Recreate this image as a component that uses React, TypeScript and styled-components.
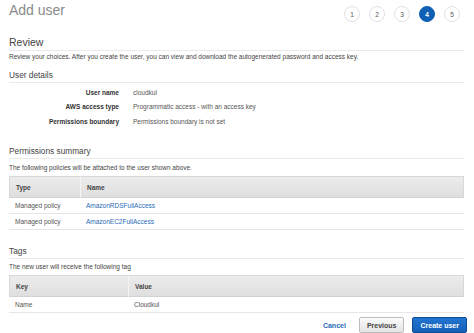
import React from "react";
import styled, { createGlobalStyle } from "styled-components";

const GlobalStyle = createGlobalStyle`
    html, body {
        margin: 0;
        padding: 0;
        background: #ffffff;
    }
    body {
        font-family: "Liberation Sans", Arial, Helvetica, sans-serif;
        color: #444;
    }
`;

const Page = styled.div`
    width: 474px;
    height: 333px;
    overflow: hidden;
    box-sizing: border-box;
    padding: 0 10px 0 9px;
    display: flex;
    flex-direction: column;
`;

const Header = styled.div`
    display: flex;
    justify-content: space-between;
    align-items: flex-start;
    height: 32px;
`;

const Title = styled.h1`
    margin: 0;
    font-size: 14px;
    line-height: 20px;
    font-weight: normal;
    color: #8a8a8a;
`;

const Steps = styled.div`
    display: flex;
    gap: 9px;
    margin-top: 6px;
    margin-right: 4px;
`;

const Step = styled.div<{ $active?: boolean }>`
    width: 16px;
    height: 16px;
    box-sizing: border-box;
    border-radius: 50%;
    display: flex;
    align-items: center;
    justify-content: center;
    font-size: 6.5px;
    border: 1px solid ${(p) => (p.$active ? "#0f5fb5" : "#e2e2e2")};
    background: ${(p) => (p.$active ? "#0f5fb5" : "#ffffff")};
    color: ${(p) => (p.$active ? "#ffffff" : "#555")};
    font-weight: ${(p) => (p.$active ? "bold" : "normal")};
`;

const PageHeading = styled.h2`
    margin: 0;
    padding: 3px 0 1px;
    font-size: 10.5px;
    line-height: 14px;
    font-weight: normal;
    color: #444;
    border-bottom: 1px solid #eaeaea;
`;

const SectionHeading = styled.h3<{ $top: number }>`
    margin: ${(p) => p.$top}px 0 0;
    padding-bottom: 1px;
    font-size: 8.3px;
    line-height: 12px;
    font-weight: normal;
    color: #444;
    border-bottom: 1px solid #eaeaea;
`;

const Description = styled.p<{ $top: number }>`
    margin: ${(p) => p.$top}px 0 0;
    font-size: 6.5px;
    line-height: 10px;
    color: #444;
`;

const Details = styled.div`
    display: grid;
    grid-template-columns: 110px 1fr;
    column-gap: 14px;
    margin-top: 3px;
`;

const DetailLabel = styled.div`
    text-align: right;
    font-weight: bold;
    font-size: 6.5px;
    line-height: 14.5px;
    color: #333;
`;

const DetailValue = styled.div`
    font-size: 6.5px;
    line-height: 14.5px;
    color: #555;
`;

const Table = styled.div<{ $cols: string; $top: number }>`
    display: grid;
    grid-template-columns: ${(p) => p.$cols};
    margin-top: ${(p) => p.$top}px;
    font-size: 6.5px;
`;

const HeadCell = styled.div`
    height: 20px;
    display: flex;
    align-items: center;
    padding-left: 6px;
    font-weight: bold;
    color: #444;
    background: linear-gradient(#ececec, #dfdfdf);
    border-top: 1px solid #d8d8d8;
    border-bottom: 1px solid #d2d2d2;
    &:first-child {
        border-left: 1px solid #d8d8d8;
    }
    & + & {
        border-left: 1px solid #f4f4f4;
        border-right: 1px solid #d8d8d8;
    }
`;

const Cell = styled.div<{ $link?: boolean }>`
    height: 15px;
    display: flex;
    align-items: center;
    padding-left: 6px;
    border-bottom: 1px solid #e6e6e6;
    color: ${(p) => (p.$link ? "#2a6ab8" : "#555")};
`;

const Footer = styled.div`
    display: flex;
    justify-content: flex-end;
    align-items: center;
    gap: 8px;
    margin-top: 4px;
    margin-right: -3px;
`;

const LinkButton = styled.button`
    border: none;
    background: none;
    padding: 0;
    margin-right: 5px;
    font-family: inherit;
    font-size: 7px;
    font-weight: bold;
    color: #2a6ab8;
`;

const Button = styled.button<{ $primary?: boolean }>`
    height: 16px;
    box-sizing: border-box;
    padding: 0 7px;
    border-radius: 2px;
    font-family: inherit;
    font-size: 7px;
    font-weight: bold;
    border: 1px solid ${(p) => (p.$primary ? "#0b4d96" : "#bcbcbc")};
    background: ${(p) =>
        p.$primary
            ? "linear-gradient(#2274cf, #1360b8)"
            : "linear-gradient(#fbfbfb, #e4e4e4)"};
    color: ${(p) => (p.$primary ? "#ffffff" : "#444")};
    min-width: ${(p) => (p.$primary ? "50px" : "40px")};
`;

const details = [
    ["User name", "cloudkul"],
    ["AWS access type", "Programmatic access - with an access key"],
    ["Permissions boundary", "Permissions boundary is not set"],
];

const policies = ["AmazonRDSFullAccess", "AmazonEC2FullAccess"];

const App: React.FC = () => {
    return (
        <>
            <GlobalStyle />
            <Page>
                <Header>
                    <Title>Add user</Title>
                    <Steps>
                        {[1, 2, 3, 4, 5].map((n) => (
                            <Step key={n} $active={n === 4}>
                                {n}
                            </Step>
                        ))}
                    </Steps>
                </Header>

                <PageHeading>Review</PageHeading>
                <Description $top={1}>
                    Review your choices. After you create the user, you can view and download the
                    autogenerated password and access key.
                </Description>

                <SectionHeading $top={7}>User details</SectionHeading>
                <Details>
                    {details.map(([label, value]) => (
                        <React.Fragment key={label}>
                            <DetailLabel>{label}</DetailLabel>
                            <DetailValue>{value}</DetailValue>
                        </React.Fragment>
                    ))}
                </Details>

                <SectionHeading $top={16}>Permissions summary</SectionHeading>
                <Description $top={4}>
                    The following policies will be attached to the user shown above.
                </Description>
                <Table $cols="71px 1fr" $top={3}>
                    <HeadCell>Type</HeadCell>
                    <HeadCell>Name</HeadCell>
                    {policies.map((name) => (
                        <React.Fragment key={name}>
                            <Cell>Managed policy</Cell>
                            <Cell $link>{name}</Cell>
                        </React.Fragment>
                    ))}
                </Table>

                <SectionHeading $top={15}>Tags</SectionHeading>
                <Description $top={3}>The new user will receive the following tag</Description>
                <Table $cols="119px 1fr" $top={3}>
                    <HeadCell>Key</HeadCell>
                    <HeadCell>Value</HeadCell>
                    <Cell>Name</Cell>
                    <Cell>Cloudkul</Cell>
                </Table>

                <Footer>
                    <LinkButton>Cancel</LinkButton>
                    <Button>Previous</Button>
                    <Button $primary>Create user</Button>
                </Footer>
            </Page>
        </>
    );
};

export default App;
